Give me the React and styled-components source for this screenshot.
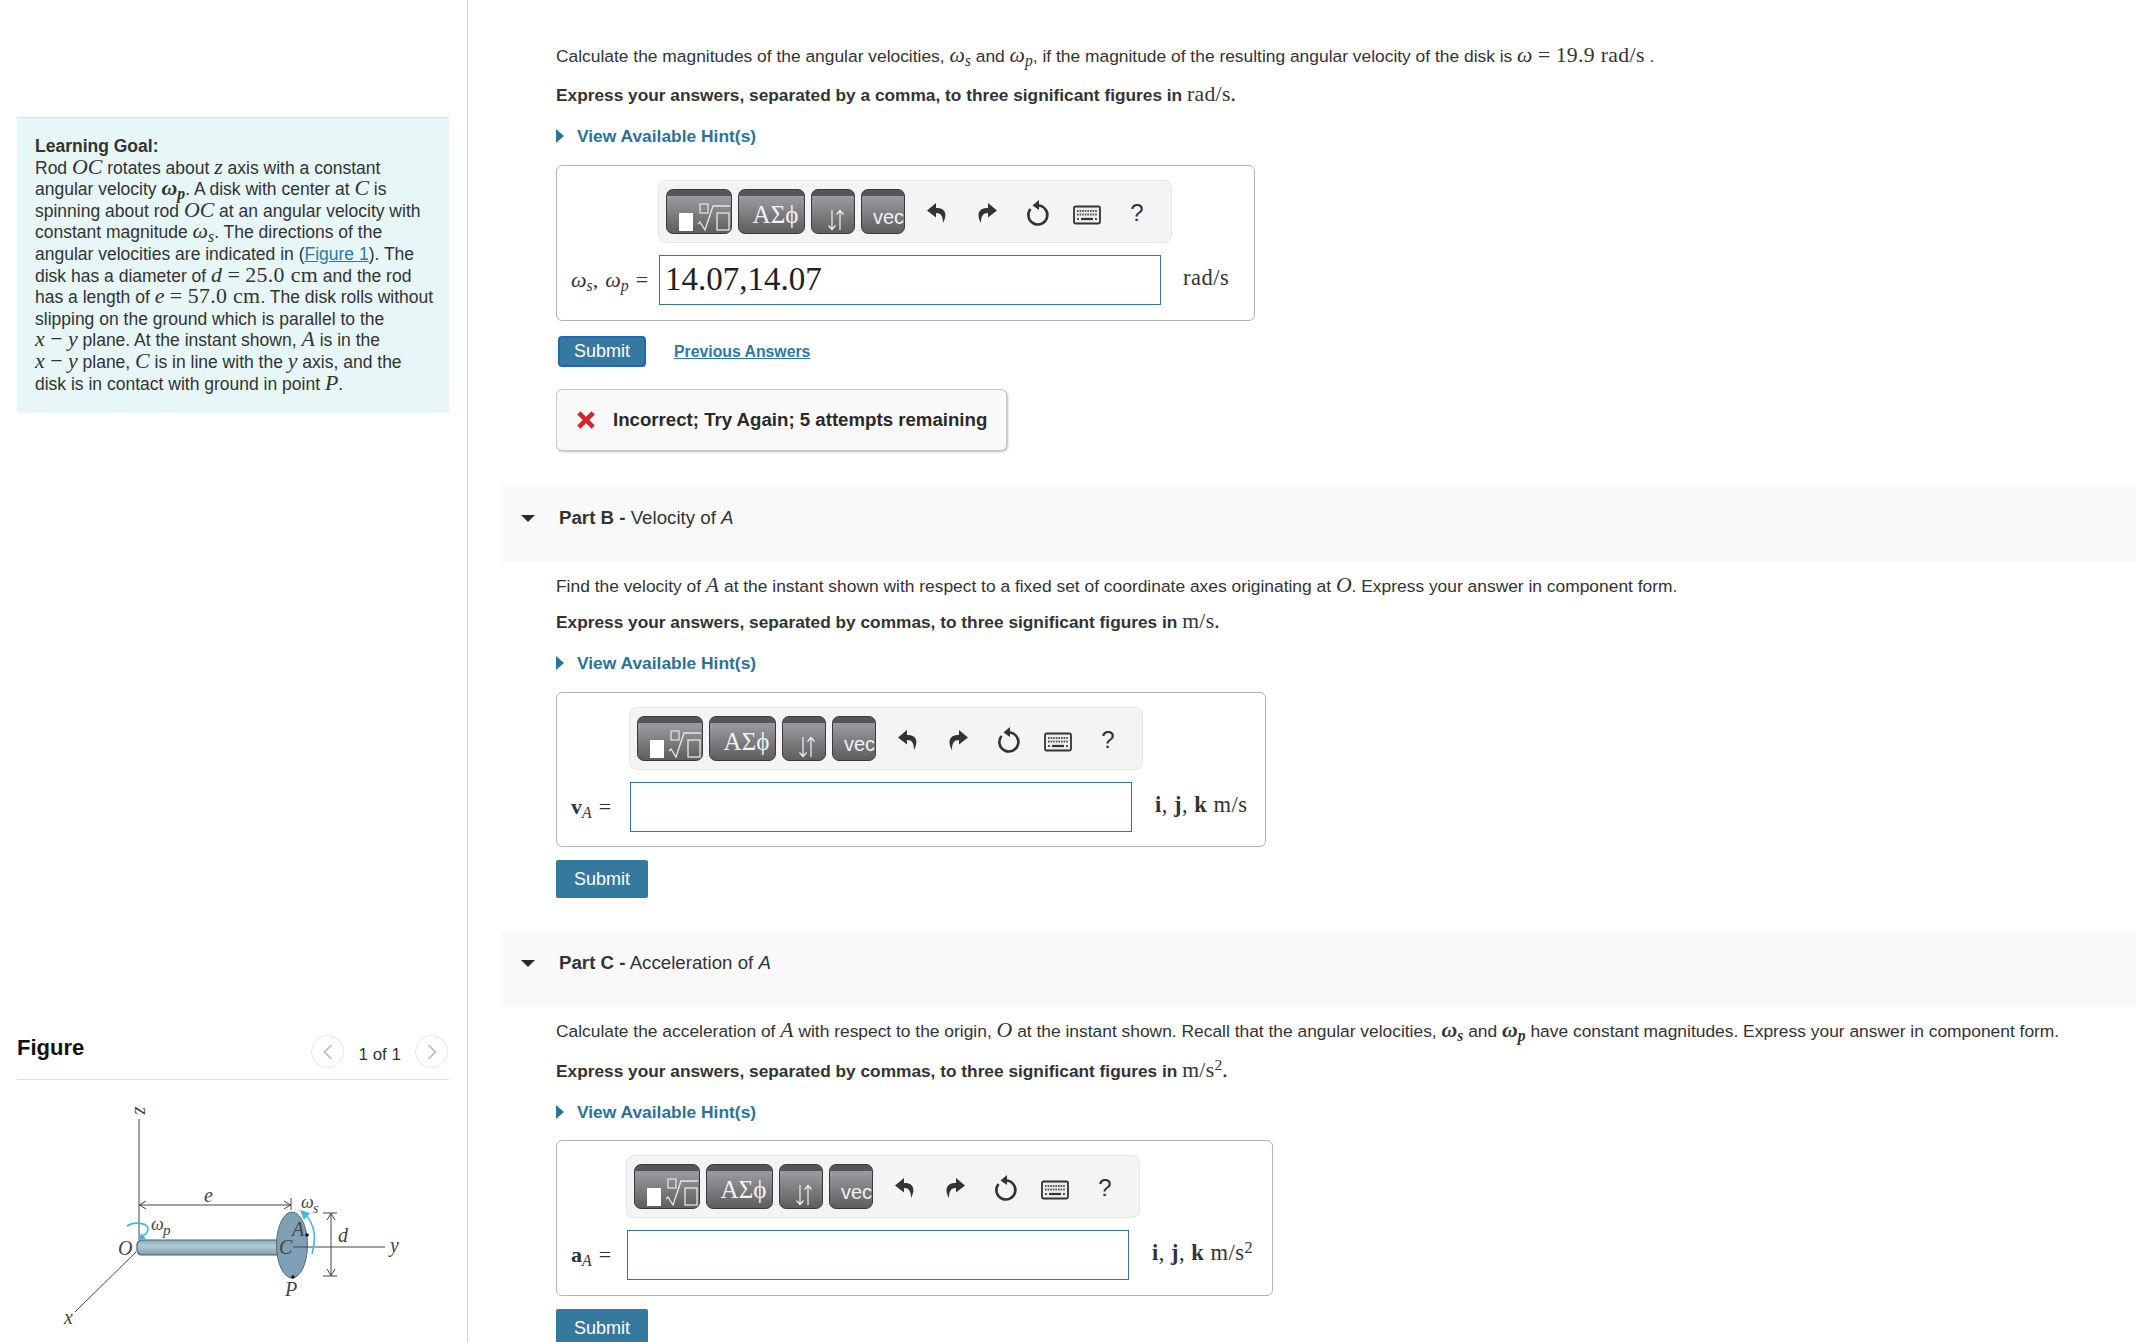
import React from 'react';
import styled, { createGlobalStyle } from 'styled-components';

const GlobalStyle = createGlobalStyle`
  html, body {
    margin: 0;
    padding: 0;
    background: #fff;
  }
  body {
    font-family: 'Liberation Sans', Arial, sans-serif;
    font-size: 17px;
    color: #333;
  }
`;

const Page = styled.div`
  display: flex;
  width: 2136px;
  height: 1342px;
  overflow: hidden;
`;

const Sidebar = styled.aside`
  flex: 0 0 468px;
  box-sizing: border-box;
  padding: 117px 18px 0 17px;
  border-right: 1.5px solid #c5d2e4;
`;

const GoalBox = styled.div`
  box-sizing: border-box;
  width: 432px;
  height: 296px;
  padding: 18px 18px 0;
  background: #e7f6f6;
  border-top: 1px solid #d9e2e2;
  font-size: 17.5px;
  line-height: 21.6px;
  white-space: nowrap;
`;

const GoalTitle = styled.div`
  font-weight: 700;
`;

const FigureHead = styled.div`
  box-sizing: border-box;
  display: flex;
  align-items: center;
  height: 50px;
  margin-top: 617px;
  padding: 0 1px 6px 0;
  border-bottom: 1px solid #dde1e6;
`;

const FigureTitle = styled.h2`
  flex: 1;
  margin: 0 0 8px;
  font-size: 22px;
  font-weight: 700;
  color: #111;
`;

const NavCircle = styled.span`
  box-sizing: border-box;
  display: flex;
  align-items: center;
  justify-content: center;
  width: 33px;
  height: 33px;
  border: 1px solid #e6e6e6;
  border-radius: 50%;
`;

const NavCount = styled.span`
  margin: 6px 14px 0;
  font-size: 17px;
  color: #333;
`;

const FigureSvg = styled.svg`
  display: block;
  width: 350px;
  height: 230px;
  margin: 19px 0 0 43px;
`;

const Main = styled.main`
  flex: 1;
  padding-left: 33px;
  min-width: 0;
`;

const Section = styled.section`
  padding-left: 55px;
`;

const Para = styled.p`
  margin: ${(p) => p.$mt}px 0 0;
  font-size: ${(p) => (p.$bold ? 17.3 : 17.4)}px;
  font-weight: ${(p) => (p.$bold ? 700 : 400)};
  line-height: 24px;
  white-space: nowrap;
`;

const M = styled.span`
  font-family: 'Liberation Serif', 'Times New Roman', serif;
  font-style: ${(p) => (p.$up ? 'normal' : 'italic')};
  font-weight: ${(p) => (p.$strong ? 700 : 400)};
  font-size: 1.25em;
  letter-spacing: ${(p) => (p.$up ? '0.015em' : '0')};
  line-height: 0;
  color: #333;
`;

const Eq = styled.span`
  margin: 0 0.25em;
  font-family: 'Liberation Serif', 'Times New Roman', serif;
  font-size: 1.25em;
  font-weight: 400;
  line-height: 0;
`;

const Sub = styled.sub`
  font-size: 0.72em;
  line-height: 0;
  vertical-align: -0.25em;
`;

const Sup = styled.sup`
  font-size: 0.72em;
  line-height: 0;
  vertical-align: 0.45em;
`;

const DocLink = styled.a`
  color: #2b7ba3;
  text-decoration: underline;
`;

const Hint = styled.div`
  display: flex;
  align-items: center;
  gap: 13px;
  margin-top: ${(p) => p.$mt}px;
  height: 24px;
  font-size: 17.4px;
  font-weight: 700;
  color: #2c7296;
`;

const HintArrow = styled.span`
  width: 0;
  height: 0;
  border-style: solid;
  border-width: 7.5px 0 7.5px 8px;
  border-color: transparent transparent transparent #2c7296;
`;

const AnswerBox = styled.div`
  box-sizing: border-box;
  width: ${(p) => p.$w}px;
  height: ${(p) => p.$h}px;
  margin-top: ${(p) => p.$mt}px;
  padding: 14px 0 0;
  border: 1px solid #b4b4b4;
  border-radius: 6px;
`;

const Toolbar = styled.div`
  box-sizing: border-box;
  display: flex;
  align-items: center;
  gap: 6px;
  width: 514px;
  height: 63px;
  margin-left: ${(p) => p.$ml}px;
  padding: 0 7px;
  background: #f4f4f4;
  border: 1px solid #e6e6e6;
  border-radius: 8px;
`;

const ToolBtn = styled.span`
  box-sizing: border-box;
  display: flex;
  align-items: flex-end;
  justify-content: ${(p) => (p.$end ? 'flex-end' : 'center')};
  flex: 0 0 ${(p) => p.$w}px;
  height: 45px;
  padding-bottom: ${(p) => p.$pb || 0}px;
  background: linear-gradient(#565656 0 6px, #9b9ba3 6px, #5e5e5e 100%);
  border: 1px solid #3a3a3a;
  border-radius: 7px;
  color: #f2f2f2;
`;

const GreekLabel = styled.span`
  margin-left: 8px;
  font-family: 'Liberation Serif', serif;
  font-size: 25px;
  line-height: 28px;
`;

const VecLabel = styled.span`
  font-size: 20px;
  line-height: 24px;
`;

const ToolIcon = styled.span`
  display: flex;
  align-items: center;
  justify-content: center;
  flex: 0 0 50px;
  height: 30px;
  margin-left: ${(p) => p.$ml || 0}px;
  margin-right: -6px;
  padding-top: ${(p) => p.$pt || 2}px;
  color: #333;
  font-size: 24px;
`;

const AnswerRow = styled.div`
  display: flex;
  align-items: center;
  height: 50px;
  margin-top: 12px;
`;

const EqLabel = styled.span`
  box-sizing: border-box;
  flex: 0 0 ${(p) => p.$w}px;
  padding-left: 14px;
  font-family: 'Liberation Serif', serif;
  font-size: 22px;
  word-spacing: 1.5px;
  white-space: nowrap;
`;

const AnswerInput = styled.div`
  box-sizing: border-box;
  flex: 0 0 502px;
  height: 50px;
  padding-left: 5px;
  border: 1px solid #31769a;
  font-family: 'Liberation Serif', serif;
  font-size: 33px;
  line-height: 47px;
  color: #222;
`;

const Units = styled.span`
  margin: -4px 0 0 ${(p) => p.$ml}px;
  font-family: 'Liberation Serif', serif;
  font-size: 22.5px;
  letter-spacing: 0.5px;
  white-space: nowrap;
`;

const ActionRow = styled.div`
  display: flex;
  align-items: center;
  gap: 28px;
  margin-top: 15px;
  margin-left: 2px;
`;

const SubmitBtn = styled.button`
  box-sizing: border-box;
  display: block;
  width: ${(p) => (p.$focused ? 88 : 92)}px;
  height: ${(p) => (p.$focused ? 31 : 38)}px;
  margin: ${(p) => p.$mt || 0}px 0 0;
  padding: 0;
  border: ${(p) => (p.$focused ? '2px solid #1f66b8' : '0')};
  border-radius: ${(p) => (p.$focused ? 4 : 2)}px;
  background: #357a9e;
  color: #fff;
  font-family: 'Liberation Sans', Arial, sans-serif;
  font-size: 18px;
`;

const PrevLink = styled.a`
  color: #2c7a9f;
  font-size: 15.8px;
  font-weight: 700;
  text-decoration: underline;
`;

const Feedback = styled.div`
  box-sizing: border-box;
  display: flex;
  align-items: center;
  gap: 16px;
  width: 451px;
  height: 62px;
  margin-top: 22px;
  padding-left: 18px;
  background: #f9f9f9;
  border: 1px solid #c8c8c8;
  border-radius: 6px;
  box-shadow: 1px 1px 2px #bbb;
  font-size: 18.65px;
  font-weight: 700;
  color: #2a2a2a;
  white-space: nowrap;
`;

const PartBand = styled.div`
  box-sizing: border-box;
  display: flex;
  align-items: flex-start;
  height: 75px;
  margin-top: ${(p) => p.$mt}px;
  padding: 19px 0 0 20px;
  background: #f9f9f9;
  font-size: 18.7px;
  line-height: 24px;
`;

const Caret = styled.span`
  width: 0;
  height: 0;
  margin: 9px 24px 0 0;
  border-style: solid;
  border-width: 7px 7.5px 0;
  border-color: #2a2a2a transparent transparent;
`;

const PartTitle = styled.span`
  b {
    font-weight: 700;
  }
  i {
    font-style: italic;
  }
`;

const Undo = ({ flip }) => (
  <svg width="22" height="25" viewBox="0 0 22 25" style={flip ? { transform: 'scaleX(-1)' } : undefined}>
    <path d="M10 2 L1 9.5 L10 16.5 V12 C15 12 17 15 17 22 C21 15 21 7 10 7 Z" fill="#333" />
  </svg>
);

const Reload = () => (
  <svg width="26" height="30" viewBox="0 0 26 30">
    <path d="M14 6.5 A9.5 9.5 0 1 1 6.5 10" fill="none" stroke="#333" strokeWidth="2.6" />
    <path d="M15 1 L15 11 L8.5 6.5 Z" fill="#333" />
  </svg>
);

const Keyboard = () => (
  <svg width="28" height="20" viewBox="0 0 28 20">
    <rect x="1" y="1.5" width="26" height="17" rx="1.5" fill="#eee" stroke="#333" strokeWidth="1.8" />
    <path d="M4 6 H24 M4 9.5 H24" stroke="#555" strokeWidth="2" strokeDasharray="1.6 1" />
    <path d="M8 14 H20" stroke="#333" strokeWidth="2.2" />
    <path d="M4 14 H6 M22 14 H24" stroke="#555" strokeWidth="2" />
  </svg>
);

const TemplateGlyph = () => (
  <svg width="64" height="43" viewBox="0 0 64 43" style={{ flexShrink: 0 }}>
    <rect x="12" y="23" width="14" height="18" fill="#fff" />
    <rect x="33" y="14" width="8" height="9" fill="none" stroke="#e8e8e8" strokeWidth="1.2" />
    <path d="M31 34 L33 32 L38 40 L46 16 H63" fill="none" stroke="#e8e8e8" strokeWidth="1.3" />
    <rect x="50" y="23" width="12" height="17" fill="none" stroke="#e8e8e8" strokeWidth="1.3" />
  </svg>
);

const ArrowsGlyph = () => (
  <svg width="20" height="22" viewBox="0 0 20 22" style={{ marginLeft: 6 }}>
    <path
      d="M6 1 V20 M2.5 16.5 L6 20.5 L9.5 16.5 M14 21 V2 M10.5 5.5 L14 1.5 L17.5 5.5"
      fill="none"
      stroke="#f2f2f2"
      strokeWidth="1.2"
    />
  </svg>
);

const MathToolbar = ({ ml }) => (
  <Toolbar $ml={ml}>
    <ToolBtn $w={66}>
      <TemplateGlyph />
    </ToolBtn>
    <ToolBtn $w={67} $pb={4}>
      <GreekLabel>ΑΣϕ</GreekLabel>
    </ToolBtn>
    <ToolBtn $w={44} $pb={2}>
      <ArrowsGlyph />
    </ToolBtn>
    <ToolBtn $w={44} $end $pb={4}>
      <VecLabel>vec</VecLabel>
    </ToolBtn>
    <ToolIcon $ml={1} $pt={4}>
      <Undo />
    </ToolIcon>
    <ToolIcon $pt={4}>
      <Undo flip />
    </ToolIcon>
    <ToolIcon $pt={5}>
      <Reload />
    </ToolIcon>
    <ToolIcon $pt={7}>
      <Keyboard />
    </ToolIcon>
    <ToolIcon>?</ToolIcon>
  </Toolbar>
);

const Omega = ({ s, strong }) => (
  <M $strong={strong}>
    ω<Sub>{s}</Sub>
  </M>
);

const Answer = ({ w, h = 156, mt, labelW, label, value, units, unitsMl }) => (
  <AnswerBox $w={w} $h={h} $mt={mt}>
    <MathToolbar ml={labelW - 1} />
    <AnswerRow>
      <EqLabel $w={labelW}>{label}</EqLabel>
      <AnswerInput>{value}</AnswerInput>
      <Units $ml={unitsMl}>{units}</Units>
    </AnswerRow>
  </AnswerBox>
);

const FigureDrawing = () => (
  <FigureSvg viewBox="60 1100 350 230">
    <defs>
      <linearGradient id="rodFill" x1="0" y1="0" x2="0" y2="1">
        <stop offset="0" stopColor="#8aa8ba" />
        <stop offset="0.4" stopColor="#b3cad8" />
        <stop offset="1" stopColor="#7d9db0" />
      </linearGradient>
    </defs>
    <g stroke="#444" strokeWidth="1" fill="none">
      <path d="M139 1120 V1241" />
      <path d="M136 1253 L75 1313" />
      <path d="M139 1206 H291 M291 1199 V1211" />
      <path d="M146 1202 L139.5 1206 L146 1210 M284 1202 L290.5 1206 L284 1210" />
      <path d="M331 1214 V1277 M323 1214 H337 M323 1277 H337" />
      <path d="M327 1221 L331 1214.5 L335 1221 M327 1270 L331 1276.5 L335 1270" />
    </g>
    <rect x="137" y="1241" width="146" height="15" rx="5" fill="url(#rodFill)" stroke="#4c5a63" strokeWidth="1.2" />
    <ellipse cx="292" cy="1246" rx="15.5" ry="33" fill="#7f9fb6" stroke="#46535c" strokeWidth="0.8" />
    <path d="M293 1248 H385" stroke="#444" strokeWidth="1" />
    <circle cx="307" cy="1236" r="1.8" fill="#111" />
    <circle cx="293" cy="1278" r="1.8" fill="#111" />
    <path d="M304 1214 C316 1226 316 1240 312 1255" fill="none" stroke="#3fb6ea" strokeWidth="1.6" />
    <path d="M300 1211 L310 1214 L304 1221 Z" fill="#3fb6ea" />
    <path d="M127 1227 C134 1222 148 1224 148 1230 C148 1234 145 1236 141 1238" fill="none" stroke="#3fb6ea" strokeWidth="1.6" />
    <path d="M139 1241 L146 1240 L141 1234 Z" fill="#3fb6ea" />
    <g fontFamily="'Liberation Serif', serif" fontStyle="italic" fontSize="20" fill="#444">
      <text x="134" y="1117.5" transform="rotate(90 139 1113)">z</text>
      <text x="64" y="1325">x</text>
      <text x="390" y="1253">y</text>
      <text x="204" y="1203">e</text>
      <text x="118" y="1256">O</text>
      <text x="279" y="1255">C</text>
      <text x="292" y="1237">A</text>
      <text x="285" y="1297">P</text>
      <text x="338" y="1243">d</text>
      <text x="151" y="1231" fontSize="18">ω</text>
      <text x="163" y="1236" fontSize="15">p</text>
      <text x="301" y="1209" fontSize="18">ω</text>
      <text x="313" y="1214" fontSize="14">s</text>
    </g>
  </FigureSvg>
);

const App = () => (
  <>
    <GlobalStyle />
    <Page>
      <Sidebar>
        <GoalBox>
          <GoalTitle>Learning Goal:</GoalTitle>
          Rod <M>OC</M> rotates about <M>z</M> axis with a constant
          <br />
          angular velocity <Omega s="p" strong />. A disk with center at <M>C</M> is
          <br />
          spinning about rod <M>OC</M> at an angular velocity with
          <br />
          constant magnitude <Omega s="s" />. The directions of the
          <br />
          angular velocities are indicated in (<DocLink>Figure 1</DocLink>). The
          <br />
          disk has a diameter of <M>d</M>
          <Eq>=</Eq>
          <M $up>25.0 cm</M> and the rod
          <br />
          has a length of <M>e</M>
          <Eq>=</Eq>
          <M $up>57.0 cm</M>. The disk rolls without
          <br />
          slipping on the ground which is parallel to the
          <br />
          <M>x</M>
          <Eq>−</Eq>
          <M>y</M> plane. At the instant shown, <M>A</M> is in the
          <br />
          <M>x</M>
          <Eq>−</Eq>
          <M>y</M> plane, <M>C</M> is in line with the <M>y</M> axis, and the
          <br />
          disk is in contact with ground in point <M>P</M>.
        </GoalBox>

        <FigureHead>
          <FigureTitle>Figure</FigureTitle>
          <NavCircle>
            <svg width="12" height="18" viewBox="0 0 12 18">
              <path d="M9.5 2 L2.5 9 L9.5 16" fill="none" stroke="#b8b8b8" strokeWidth="1.6" />
            </svg>
          </NavCircle>
          <NavCount>1 of 1</NavCount>
          <NavCircle>
            <svg width="12" height="18" viewBox="0 0 12 18">
              <path d="M2.5 2 L9.5 9 L2.5 16" fill="none" stroke="#b8b8b8" strokeWidth="1.6" />
            </svg>
          </NavCircle>
        </FigureHead>
        <FigureDrawing />
      </Sidebar>

      <Main>
        <Section>
          <Para $mt={44}>
            Calculate the magnitudes of the angular velocities, <Omega s="s" /> and <Omega s="p" />, if the
            magnitude of the resulting angular velocity of the disk is <M>ω</M>
            <Eq>=</Eq>
            <M $up>19.9 rad/s</M> .
          </Para>
          <Para $mt={15} $bold>
            Express your answers, separated by a comma, to three significant figures in <M $up>rad/s</M>.
          </Para>
          <Hint $mt={17}>
            <HintArrow />
            View Available Hint(s)
          </Hint>
          <Answer
            w={699}
            mt={17}
            labelW={102}
            label={
              <>
                <i>ω<Sub>s</Sub></i>, <i>ω<Sub>p</Sub></i> =
              </>
            }
            value="14.07,14.07"
            units="rad/s"
            unitsMl={22}
          />
          <ActionRow>
            <SubmitBtn $focused>Submit</SubmitBtn>
            <PrevLink>Previous Answers</PrevLink>
          </ActionRow>
          <Feedback>
            <svg width="22" height="22" viewBox="0 0 20 20">
              <path d="M2 5 L5 2 L10 7 L15 2 L18 5 L13 10 L18 15 L15 18 L10 13 L5 18 L2 15 L7 10 Z" fill="#d1282e" />
            </svg>
            Incorrect; Try Again; 5 attempts remaining
          </Feedback>
        </Section>

        <PartBand $mt={36}>
          <Caret />
          <PartTitle>
            <b>Part B -</b> Velocity of <i>A</i>
          </PartTitle>
        </PartBand>
        <Section>
          <Para $mt={12}>
            Find the velocity of <M>A</M> at the instant shown with respect to a fixed set of coordinate axes
            originating at <M>O</M>. Express your answer in component form.
          </Para>
          <Para $mt={12} $bold>
            Express your answers, separated by commas, to three significant figures in <M $up>m/s</M>.
          </Para>
          <Hint $mt={17}>
            <HintArrow />
            View Available Hint(s)
          </Hint>
          <Answer
            w={710}
            h={155}
            mt={17}
            labelW={73}
            label={
              <>
                <b>v</b>
                <i>
                  <Sub>A</Sub>
                </i>{' '}
                =
              </>
            }
            units={
              <>
                <b>i</b>, <b>j</b>, <b>k</b> m/s
              </>
            }
            unitsMl={23}
          />
          <SubmitBtn $mt={13}>Submit</SubmitBtn>
        </Section>

        <PartBand $mt={34}>
          <Caret />
          <PartTitle>
            <b>Part C -</b> Acceleration of <i>A</i>
          </PartTitle>
        </PartBand>
        <Section>
          <Para $mt={12}>
            Calculate the acceleration of <M>A</M> with respect to the origin, <M>O</M> at the instant shown. Recall
            that the angular velocities, <Omega s="s" strong /> and <Omega s="p" strong /> have constant magnitudes.
            Express your answer in component form.
          </Para>
          <Para $mt={16} $bold>
            Express your answers, separated by commas, to three significant figures in{' '}
            <M $up>
              m/s<Sup>2</Sup>
            </M>
            .
          </Para>
          <Hint $mt={17}>
            <HintArrow />
            View Available Hint(s)
          </Hint>
          <Answer
            w={717}
            mt={16}
            labelW={70}
            label={
              <>
                <b>a</b>
                <i>
                  <Sub>A</Sub>
                </i>{' '}
                =
              </>
            }
            units={
              <>
                <b>i</b>, <b>j</b>, <b>k</b> m/s<Sup>2</Sup>
              </>
            }
            unitsMl={23}
          />
          <SubmitBtn $mt={13}>Submit</SubmitBtn>
        </Section>
      </Main>
    </Page>
  </>
);

export default App;
